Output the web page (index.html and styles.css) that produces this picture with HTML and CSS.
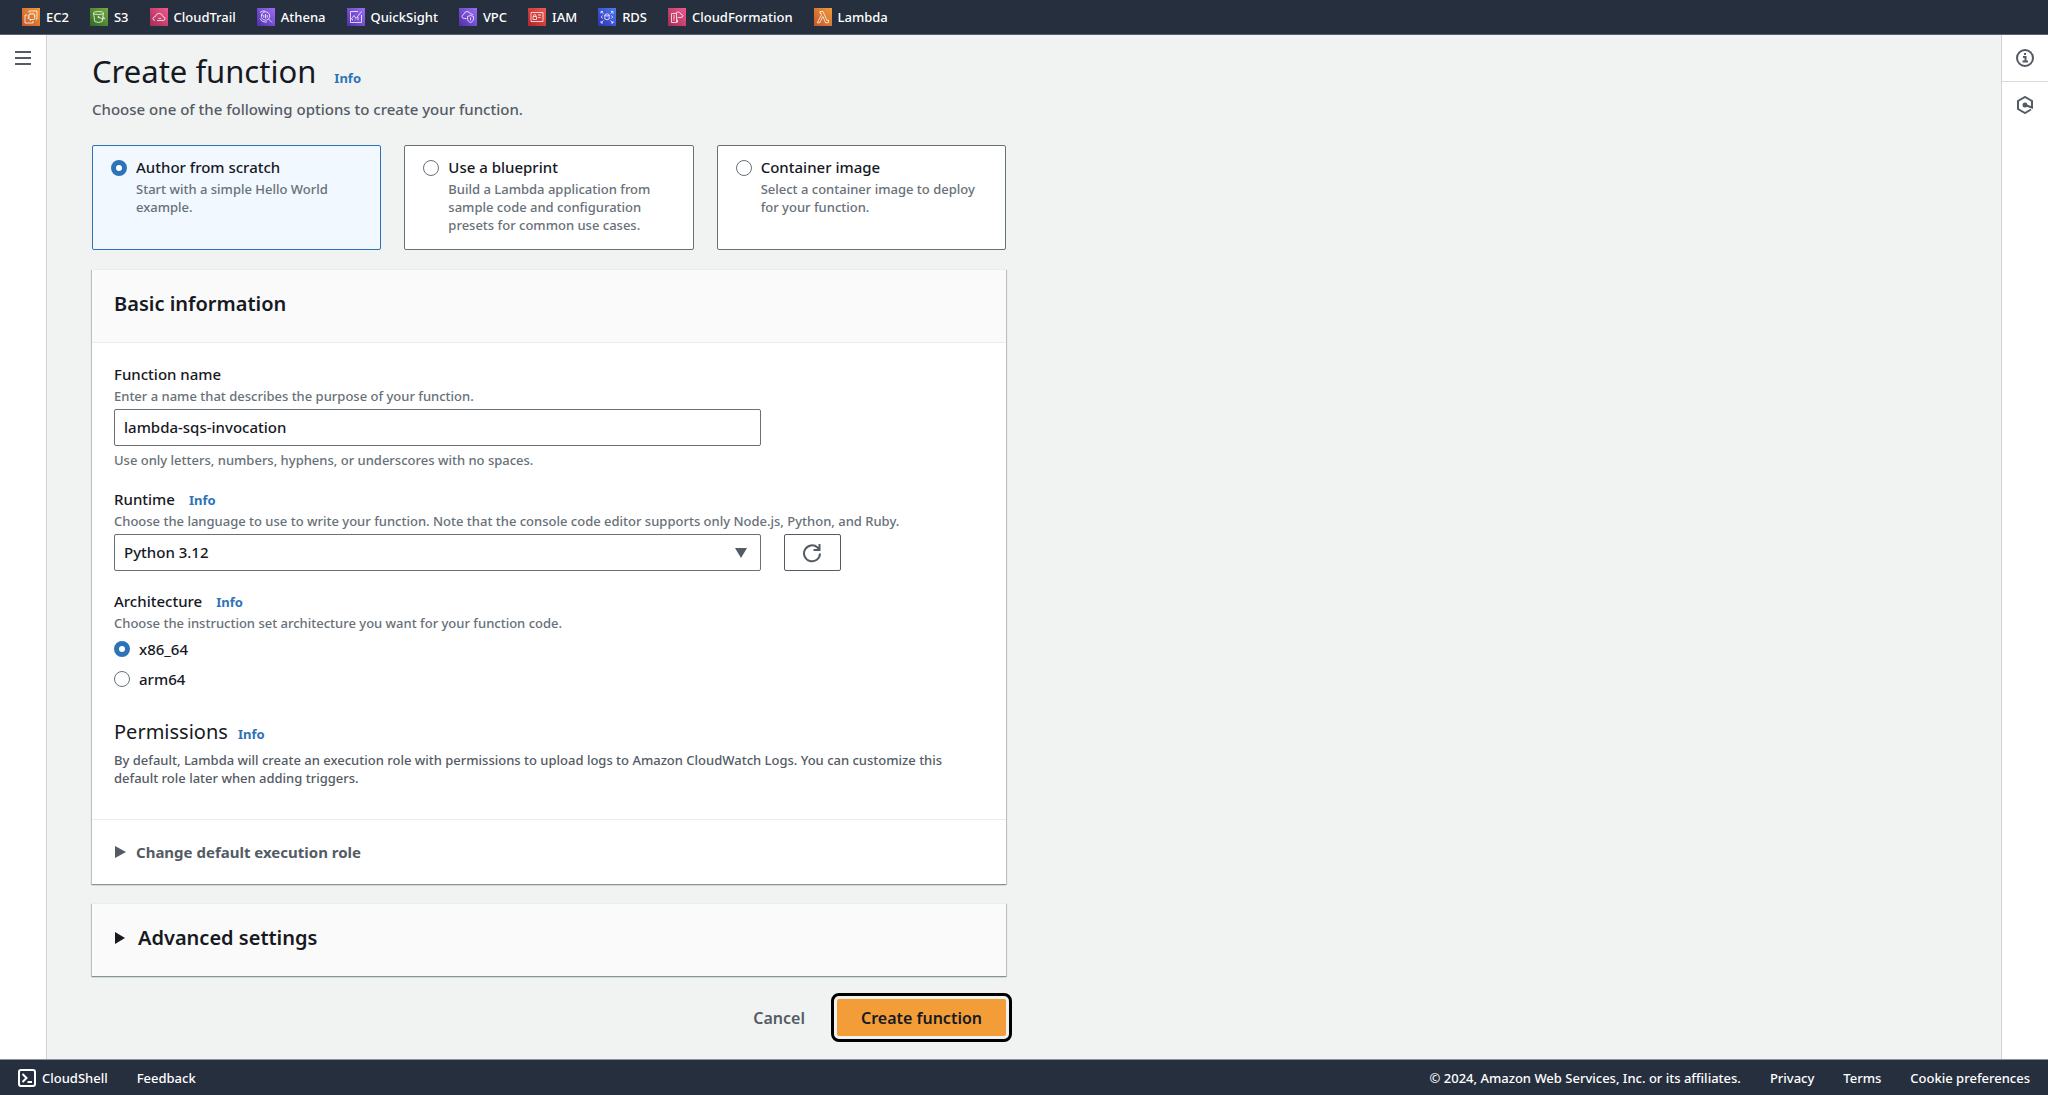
FILE: index.html
```html
<!DOCTYPE html>
<html lang="en">
<head>
    <meta charset="UTF-8">
    <meta name="viewport" content="width=device-width, initial-scale=1.0">
    <title>Create function - Lambda</title>
    <link rel="stylesheet" href="styles.css">
</head>
<body>
    <!-- gradients shared by the service icons -->
    <svg class="defs" width="0" height="0" aria-hidden="true">
        <defs>
            <linearGradient id="orange" x1="0" y1="1" x2="1" y2="0"><stop offset="0" stop-color="#c4572a"/><stop offset="1" stop-color="#f19a3a"/></linearGradient>
            <linearGradient id="green" x1="0" y1="1" x2="1" y2="0"><stop offset="0" stop-color="#2f6a25"/><stop offset="1" stop-color="#76ab42"/></linearGradient>
            <linearGradient id="pink" x1="0" y1="1" x2="1" y2="0"><stop offset="0" stop-color="#a62a55"/><stop offset="1" stop-color="#ee5a8b"/></linearGradient>
            <linearGradient id="purple" x1="0" y1="1" x2="1" y2="0"><stop offset="0" stop-color="#4f2fac"/><stop offset="1" stop-color="#9c6cf6"/></linearGradient>
            <linearGradient id="red" x1="0" y1="1" x2="1" y2="0"><stop offset="0" stop-color="#b2232c"/><stop offset="1" stop-color="#f0594f"/></linearGradient>
            <linearGradient id="blue" x1="0" y1="1" x2="1" y2="0"><stop offset="0" stop-color="#2d31b4"/><stop offset="1" stop-color="#4f7bf2"/></linearGradient>
        </defs>
    </svg>

    <nav class="topbar" aria-label="Favorites">
        <a href="#"><svg viewBox="0 0 18 18"><rect width="18" height="18" fill="url(#orange)"/><rect x="7" y="6" width="5.500" height="5.500" rx="1"/><path d="M7 4.500V3H15V11H13.500M5 7H3V15H11V13M8.500 6V4.800M11 6V4.800M8.500 11.500V13M7 8H5.500M7 10H5.500M12.500 8H13.800"/></svg><span>EC2</span></a>
        <a href="#"><svg viewBox="0 0 18 18"><rect width="18" height="18" fill="url(#green)"/><ellipse cx="8.500" cy="5" rx="5" ry="1.500"/><path d="M3.500 5L4.800 13.500Q8.500 15.500 12.200 13.500L13.500 5M8.500 9Q12 11.500 14.500 10.800Q15 10 12.800 8.800"/><circle cx="8.500" cy="9" r=".6"/></svg><span>S3</span></a>
        <a href="#"><svg viewBox="0 0 18 18"><rect width="18" height="18" fill="url(#pink)"/><path d="M7 12.500H13Q15.500 12.300 15 10Q14.500 8.500 12.800 8.500Q12.300 5.500 9 5.300Q5.800 5.500 5.500 8.500Q3 8.800 3 10.500Q3 12.500 5 12.500M8.500 10.500H11"/></svg><span>CloudTrail</span></a>
        <a href="#"><svg viewBox="0 0 18 18"><rect width="18" height="18" fill="url(#purple)"/><circle cx="8.500" cy="8" r="4.200"/><path d="M11.500 11L15 14.500M6.800 9.800V7M8.500 10.500V6M10.200 9.800V7M3 4.500Q5 2.500 8 3M3 10.500Q4 13 7 14H10M4 7H6"/></svg><span>Athena</span></a>
        <a href="#"><svg viewBox="0 0 18 18"><rect width="18" height="18" fill="url(#purple)"/><path d="M11 3.500H3.500V14.500H14.500V7M3.500 12L7 7.500L9 10.500L14.500 3.500M5.500 12.500V11M8 12.500V11.500M11 12.500V9"/></svg><span>QuickSight</span></a>
        <a href="#"><svg viewBox="0 0 18 18"><rect width="18" height="18" fill="url(#purple)"/><path d="M7.500 10.500H5Q3 10.300 3 8.500Q3 7 4.800 6.500Q5 3.800 8 3.500Q10.500 3.500 11.300 5.800Q13.500 5.500 14 7.200M11.500 7.500L14.500 8.500V11.500Q14 13.500 11.500 14.700Q9 13.500 8.500 11.500V8.500ZM11.500 9.500V12.500"/></svg><span>VPC</span></a>
        <a href="#"><svg viewBox="0 0 18 18"><rect width="18" height="18" fill="url(#red)"/><path d="M3 4.500H15V13.500H3ZM10 7H13M10 9.500H12.500M5 8.500H8.500V11.500H5ZM5.700 8.500V7Q6.700 5.800 7.800 7V8.500"/></svg><span>IAM</span></a>
        <a href="#"><svg viewBox="0 0 18 18"><rect width="18" height="18" fill="url(#blue)"/><ellipse cx="9" cy="7" rx="2.200" ry="1"/><path d="M6.800 7V11Q9 12.500 11.200 11V7M3 5.500V3.500H5M3.300 3.700L5.500 5.500M15 5.500V3.500H13M14.700 3.700L12.500 5.500M3 13V15H5M3.300 14.700L5.500 12.500M15 13V15H13M14.700 14.700L12.500 12.500M4.500 7.500L3.300 9L4.500 10.500M13.500 7.500L14.700 9L13.500 10.500"/></svg><span>RDS</span></a>
        <a href="#"><svg viewBox="0 0 18 18"><rect width="18" height="18" fill="url(#pink)"/><path d="M3.500 5.500H8.500V14.500H3.500ZM5 8H7M5 10H7M5 12H6.500M9.500 9.500H13Q15 9.300 14.800 7.500Q14.300 6.200 13 6.300Q12.500 4 10.200 4Q8 4.200 7.500 5.500M9.500 11.500V14.500"/></svg><span>CloudFormation</span></a>
        <a href="#"><svg viewBox="0 0 18 18"><rect width="18" height="18" fill="url(#orange)"/><path d="M6 3.500H9L13 12.500L14.500 12V14.500L11.800 15L8.800 8.500L5.700 14.800H3.300L7.700 6.500L7.200 5.500H6Z"/></svg><span>Lambda</span></a>
    </nav>

    <div class="layout">
        <aside class="rail rail-left">
            <button type="button" aria-label="Open navigation">
                <svg width="16" height="16" viewBox="0 0 16 16"><path d="M0 2H16M0 8H16M0 14H16"/></svg>
            </button>
        </aside>

        <main>
            <form class="content">
                <header class="page-header">
                    <h1>Create function</h1>
                    <a class="info" href="#">Info</a>
                </header>
                <p class="lead">Choose one of the following options to create your function.</p>

                <div class="tiles" role="radiogroup" aria-label="Creation method">
                    <label class="tile">
                        <input type="radio" name="method" checked>
                        <span>
                            <span class="label">Author from scratch</span>
                            <span class="hint">Start with a simple Hello World example.</span>
                        </span>
                    </label>
                    <label class="tile">
                        <input type="radio" name="method">
                        <span>
                            <span class="label">Use a blueprint</span>
                            <span class="hint">Build a Lambda application from sample code and configuration presets for common use cases.</span>
                        </span>
                    </label>
                    <label class="tile">
                        <input type="radio" name="method">
                        <span>
                            <span class="label">Container image</span>
                            <span class="hint">Select a container image to deploy for your function.</span>
                        </span>
                    </label>
                </div>

                <section class="panel">
                    <div class="panel-header">
                        <h2>Basic information</h2>
                    </div>
                    <div class="panel-body">
                        <div class="field">
                            <label class="label" for="functionName">Function name</label>
                            <p class="hint">Enter a name that describes the purpose of your function.</p>
                            <div class="columns">
                                <input class="control" type="text" id="functionName" value="lambda-sqs-invocation">
                            </div>
                            <p class="hint constraint">Use only letters, numbers, hyphens, or underscores with no spaces.</p>
                        </div>

                        <div class="field">
                            <div class="label-row">
                                <label class="label" for="runtime">Runtime</label>
                                <a class="info" href="#">Info</a>
                            </div>
                            <p class="hint">Choose the language to use to write your function. Note that the console code editor supports only Node.js, Python, and Ruby.</p>
                            <div class="columns">
                                <div class="select">
                                    <select class="control" id="runtime">
                                        <option>Python 3.12</option>
                                    </select>
                                    <svg width="12" height="10" viewBox="0 0 12 10"><path d="M0 0H12L6 10Z"/></svg>
                                </div>
                                <button class="refresh" type="button" aria-label="Refresh runtimes">
                                    <svg width="20" height="20" viewBox="0 0 20 20"><path d="M18 10.500A8 8 0 1 1 15.500 4.500L17 6M17.500 1V7H11.500"/></svg>
                                </button>
                            </div>
                        </div>

                        <div class="field" role="radiogroup" aria-labelledby="architecture">
                            <div class="label-row">
                                <span class="label" id="architecture">Architecture</span>
                                <a class="info" href="#">Info</a>
                            </div>
                            <p class="hint">Choose the instruction set architecture you want for your function code.</p>
                            <label class="radio"><input type="radio" name="arch" checked>x86_64</label>
                            <label class="radio"><input type="radio" name="arch">arm64</label>
                        </div>

                        <div class="permissions">
                            <h3>Permissions</h3>
                            <a class="info" href="#">Info</a>
                        </div>
                        <p class="note">By default, Lambda will create an execution role with permissions to upload logs to Amazon CloudWatch Logs. You can customize this default role later when adding triggers.</p>
                    </div>
                    <button class="expander" type="button" aria-expanded="false">
                        <svg width="12" height="12" viewBox="0 0 12 12"><path d="M1 0L12 6L1 12Z"/></svg>
                        Change default execution role
                    </button>
                </section>

                <section class="panel">
                    <button class="expander expander-large" type="button" aria-expanded="false">
                        <svg width="12" height="12" viewBox="0 0 12 12"><path d="M1 0L11 6L1 12Z"/></svg>
                        Advanced settings
                    </button>
                </section>

                <div class="actions">
                    <button class="btn btn-link" type="button">Cancel</button>
                    <button class="btn btn-primary" type="submit">Create function</button>
                </div>
            </form>
        </main>

        <aside class="rail rail-right">
            <button type="button" aria-label="Info panel">
                <svg width="18" height="18" viewBox="0 0 18 18"><circle cx="9" cy="9" r="8"/><path d="M7 8H9.500V12.500M6.500 12.500H12M8 5H10"/></svg>
            </button>
            <button type="button" aria-label="Tutorials">
                <svg width="18" height="18" viewBox="0 0 18 18"><path d="M15 13.500L9 17L2 13V5L9 1L16 5V11.500L9 9"/><circle class="dot" cx="9" cy="9" r="2.500"/></svg>
            </button>
        </aside>
    </div>

    <footer class="footer">
        <a class="cloudshell" href="#"><svg width="18" height="18" viewBox="0 0 18 18"><rect x="1" y="1" width="16" height="16" rx="2"/><path d="M4.500 5L8.500 9L4.500 13M9.500 13H14"/></svg>CloudShell</a>
        <a href="#">Feedback</a>
        <span class="copyright">© 2024, Amazon Web Services, Inc. or its affiliates.</span>
        <a href="#">Privacy</a>
        <a href="#">Terms</a>
        <a href="#">Cookie preferences</a>
    </footer>
</body>
</html>
```
FILE: styles.css
```css
* {
    box-sizing: border-box;
}

body {
    margin: 0;
    min-height: 100vh;
    display: flex;
    flex-direction: column;
    background-color: #f1f3f3;
    color: #16191f;
    font-family: "Noto Sans", "Open Sans", sans-serif;
    font-size: 15px;
    font-weight: 500;
    line-height: 22px;
}

h1, h2, h3, p {
    margin: 0;
}

a {
    text-decoration: none;
}

button, input, select {
    font: inherit;
    color: inherit;
}

button {
    cursor: pointer;
}

svg {
    flex: none;
    fill: none;
}

.defs {
    position: absolute;
}

/* top bar */
.topbar {
    display: flex;
    align-items: center;
    gap: 21px;
    height: 35px;
    padding: 0 22px;
    background-color: #262f3e;
    border-bottom: 1px solid #5a626c;
}

.topbar a {
    display: flex;
    align-items: center;
    gap: 6px;
    color: #fff;
    font-size: 13px;
    line-height: 18px;
}

.topbar svg {
    width: 18px;
    height: 18px;
    stroke: #fff;
    stroke-opacity: .85;
    stroke-width: .9;
}

.topbar svg > rect:first-child {
    stroke: none;
}

/* page frame */
.layout {
    flex: 1;
    display: flex;
}

.rail {
    width: 47px;
    background-color: #fff;
}

.rail-left {
    border-right: 1px solid #d0d5d6;
}

.rail-right {
    border-left: 1px solid #d0d5d6;
}

.rail button {
    display: flex;
    align-items: center;
    justify-content: center;
    width: 100%;
    height: 46px;
    padding: 0;
    border: 0;
    background: none;
}

.rail-right button:first-child {
    height: 47px;
    border-bottom: 1px solid #d5dbdb;
}

.rail svg {
    stroke: #545b64;
    stroke-width: 2;
}

.rail .dot {
    fill: #545b64;
    stroke: none;
}

main {
    flex: 1;
    padding: 16px 45px 14px;
}

.content {
    max-width: 914px;
}

.page-header {
    display: flex;
    align-items: baseline;
    gap: 18px;
}

h1 {
    font-size: 31px;
    font-weight: 400;
    line-height: 40px;
}

.info {
    color: #2e73b8;
    font-size: 13px;
    font-weight: 700;
    line-height: 18px;
}

.lead {
    margin-top: 7px;
    color: #545b64;
}

/* creation method */
.tiles {
    display: grid;
    grid-template-columns: repeat(3, 1fr);
    gap: 23px;
    margin-top: 25px;
}

.tile {
    display: flex;
    gap: 9px;
    min-height: 105px;
    padding: 11px 18px;
    border: 1px solid #687078;
    border-radius: 2px;
    background-color: #fff;
}

.tile:has(input:checked) {
    border-color: #2e73b8;
    background-color: #f1f8ff;
}

.label {
    display: block;
    line-height: 20px;
}

.hint {
    display: block;
    margin-top: 3px;
    color: #687078;
    font-size: 13px;
    line-height: 18px;
}

input[type="radio"] {
    appearance: none;
    flex: none;
    width: 16px;
    height: 16px;
    margin: 3px 0;
    border: 1px solid #687078;
    border-radius: 50%;
    background-color: #fff;
}

input[type="radio"]:checked {
    border: 5px solid #2e73b8;
}

/* panels */
.panel {
    margin-top: 19px;
    background-color: #fff;
    border-top: 1px solid #eaeded;
    box-shadow: 0 1px 1px 0 #879596, 1px 1px 1px 0 #c4cbcc, -1px 1px 1px 0 #c4cbcc;
}

.panel-header {
    padding: 20px 22px 24px;
    background-color: #fafafa;
    border-bottom: 1px solid #eaeded;
}

h2, .expander-large {
    font-size: 20px;
    font-weight: 600;
    line-height: 28px;
}

.panel-body {
    padding: 21px 22px 32px;
}

.field {
    margin-bottom: 20px;
}

.label-row {
    display: flex;
    align-items: baseline;
    gap: 14px;
}

.columns {
    display: grid;
    grid-template-columns: repeat(4, 1fr);
    gap: 23px;
    margin-top: 4px;
}

.control {
    width: 100%;
    height: 37px;
    padding: 0 9px 1px;
    border: 1px solid #687078;
    border-radius: 2px;
    background-color: #fff;
}

.columns > .control, .select {
    grid-column: span 3;
}

.select {
    position: relative;
}

.select .control {
    appearance: none;
}

.select svg {
    position: absolute;
    right: 14px;
    top: 14px;
    fill: #545b64;
    pointer-events: none;
}

.constraint {
    margin-top: 5px;
}

.refresh {
    display: flex;
    align-items: center;
    justify-content: center;
    width: 57px;
    height: 37px;
    padding: 0;
    border: 1px solid #545b64;
    border-radius: 2px;
    background-color: #fff;
}

.refresh svg {
    stroke: #545b64;
    stroke-width: 2;
}

.radio {
    display: flex;
    gap: 9px;
    margin: 6px 0 8px;
}

.permissions {
    display: flex;
    align-items: baseline;
    gap: 10px;
    padding-top: 8px;
}

h3 {
    font-size: 20px;
    font-weight: 400;
    line-height: 28px;
}

.note {
    margin-top: 5px;
    color: #545b64;
    font-size: 13px;
    line-height: 18px;
}

.expander {
    display: flex;
    align-items: center;
    gap: 10px;
    width: 100%;
    padding: 21px 22px;
    border: 0;
    border-top: 1px solid #eaeded;
    background: none;
    color: #545b64;
    font-weight: 700;
    text-align: left;
}

.expander svg {
    fill: currentColor;
}

.expander-large {
    gap: 12px;
    padding: 20px 22px 24px;
    border-top: 0;
    background-color: #fafafa;
    color: #16191f;
    font-weight: 600;
}

/* buttons under the form */
.actions {
    display: flex;
    justify-content: flex-end;
    gap: 8px;
    margin-top: 23px;
}

.btn {
    height: 37px;
    padding: 0 24px;
    border: 0;
    border-radius: 2px;
    font-size: 16px;
    font-weight: 600;
}

.btn-link {
    background: none;
    color: #545b64;
}

.btn-primary {
    background-color: #f29d38;
    outline: 3px solid #000;
    outline-offset: 3px;
}

/* footer */
.footer {
    display: flex;
    align-items: center;
    gap: 29px;
    height: 36px;
    padding: 0 18px;
    background-color: #262f3e;
    border-top: 1px solid #879596;
    color: #fff;
    font-size: 13px;
    line-height: 18px;
}

.footer a {
    color: #fff;
}

.cloudshell {
    display: flex;
    align-items: center;
    gap: 6px;
}

.cloudshell svg {
    stroke: #fff;
    stroke-width: 2;
}

.copyright {
    margin-left: auto;
}
```
